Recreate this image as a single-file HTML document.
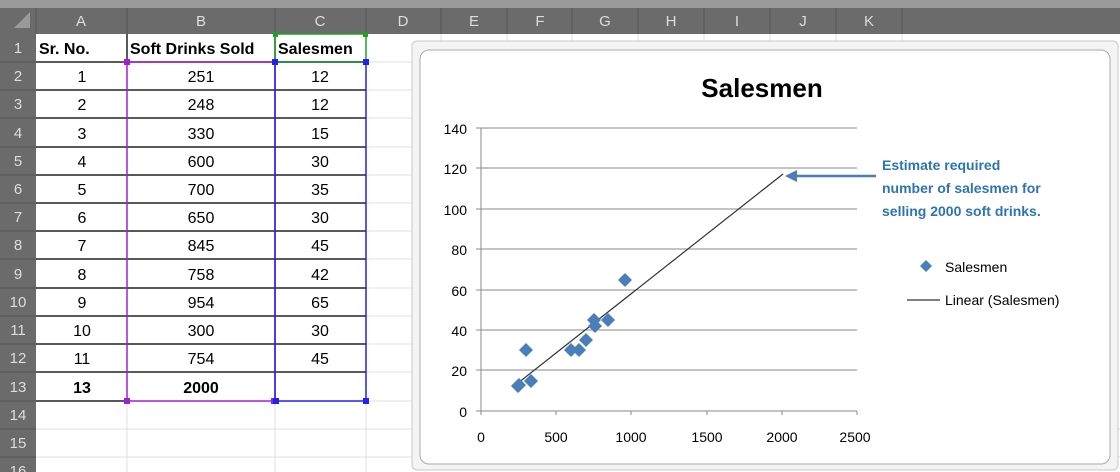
<!DOCTYPE html>
<html><head><meta charset="utf-8"><style>
*{margin:0;padding:0;box-sizing:border-box}
body{width:1120px;height:472px;overflow:hidden;background:#fff;font-family:"Liberation Sans",Carlito,sans-serif;position:relative}
.a{position:absolute}
</style></head><body>
<svg class="a" style="left:0;top:0" width="1120" height="472" xmlns="http://www.w3.org/2000/svg" font-family="Liberation Sans, sans-serif">
<rect x="0" y="0" width="1120" height="8" fill="#9a9a9a"/>
<rect x="0" y="8" width="1120" height="26" fill="#6b6b6b"/>
<rect x="0" y="34" width="36" height="438" fill="#6b6b6b"/>
<polygon points="14,28 30,28 30,12" fill="#9a9a9a"/>
<g stroke="#555" stroke-width="1">
<line x1="36" y1="8" x2="36" y2="34"/><line x1="127" y1="8" x2="127" y2="34"/><line x1="275" y1="8" x2="275" y2="34"/><line x1="366" y1="8" x2="366" y2="34"/><line x1="441" y1="8" x2="441" y2="34"/><line x1="507" y1="8" x2="507" y2="34"/><line x1="572" y1="8" x2="572" y2="34"/><line x1="638" y1="8" x2="638" y2="34"/><line x1="704" y1="8" x2="704" y2="34"/><line x1="770" y1="8" x2="770" y2="34"/><line x1="836" y1="8" x2="836" y2="34"/><line x1="902" y1="8" x2="902" y2="34"/>
</g>
<g fill="#ddd" font-size="15" text-anchor="middle">
<text x="81" y="26">A</text><text x="201" y="26">B</text><text x="320" y="26">C</text><text x="403" y="26">D</text><text x="474" y="26">E</text><text x="540" y="26">F</text><text x="605" y="26">G</text><text x="671" y="26">H</text><text x="737" y="26">I</text><text x="803" y="26">J</text><text x="869" y="26">K</text>
<text x="18" y="53">1</text><text x="18" y="81">2</text><text x="18" y="109">3</text><text x="18" y="138">4</text><text x="18" y="166">5</text><text x="18" y="194">6</text><text x="18" y="222">7</text><text x="18" y="250">8</text><text x="18" y="279">9</text><text x="18" y="307">10</text><text x="18" y="335">11</text><text x="18" y="363">12</text><text x="18" y="392">13</text><text x="18" y="420">14</text><text x="18" y="448">15</text><text x="18" y="476">16</text>
</g>
<g stroke="#555" stroke-width="1">
<line x1="0" y1="62" x2="36" y2="62"/><line x1="0" y1="90" x2="36" y2="90"/><line x1="0" y1="118" x2="36" y2="118"/><line x1="0" y1="147" x2="36" y2="147"/><line x1="0" y1="175" x2="36" y2="175"/><line x1="0" y1="203" x2="36" y2="203"/><line x1="0" y1="231" x2="36" y2="231"/><line x1="0" y1="259" x2="36" y2="259"/><line x1="0" y1="288" x2="36" y2="288"/><line x1="0" y1="316" x2="36" y2="316"/><line x1="0" y1="344" x2="36" y2="344"/><line x1="0" y1="372" x2="36" y2="372"/><line x1="0" y1="401" x2="36" y2="401"/><line x1="0" y1="429" x2="36" y2="429"/><line x1="0" y1="457" x2="36" y2="457"/>
</g>
<g stroke="#e0e0e0" stroke-width="1">
<line x1="36" y1="429" x2="1120" y2="429"/><line x1="36" y1="457" x2="1120" y2="457"/><line x1="127" y1="401" x2="127" y2="472"/><line x1="275" y1="401" x2="275" y2="472"/><line x1="366" y1="34" x2="366" y2="472"/>
<line x1="366" y1="62" x2="412" y2="62"/><line x1="366" y1="90" x2="412" y2="90"/><line x1="366" y1="118" x2="412" y2="118"/><line x1="366" y1="147" x2="412" y2="147"/><line x1="366" y1="175" x2="412" y2="175"/><line x1="366" y1="203" x2="412" y2="203"/><line x1="366" y1="231" x2="412" y2="231"/><line x1="366" y1="259" x2="412" y2="259"/><line x1="366" y1="288" x2="412" y2="288"/><line x1="366" y1="316" x2="412" y2="316"/><line x1="366" y1="344" x2="412" y2="344"/><line x1="366" y1="372" x2="412" y2="372"/><line x1="366" y1="401" x2="412" y2="401"/>
<line x1="441" y1="34" x2="441" y2="42"/><line x1="507" y1="34" x2="507" y2="42"/><line x1="572" y1="34" x2="572" y2="42"/><line x1="638" y1="34" x2="638" y2="42"/><line x1="704" y1="34" x2="704" y2="42"/><line x1="770" y1="34" x2="770" y2="42"/><line x1="836" y1="34" x2="836" y2="42"/><line x1="902" y1="34" x2="902" y2="42"/>
</g>
<g stroke="#222" stroke-width="1.5">
<line x1="36" y1="62" x2="366" y2="62"/><line x1="36" y1="90" x2="366" y2="90"/><line x1="36" y1="118" x2="366" y2="118"/><line x1="36" y1="147" x2="366" y2="147"/><line x1="36" y1="175" x2="366" y2="175"/><line x1="36" y1="203" x2="366" y2="203"/><line x1="36" y1="231" x2="366" y2="231"/><line x1="36" y1="259" x2="366" y2="259"/><line x1="36" y1="288" x2="366" y2="288"/><line x1="36" y1="316" x2="366" y2="316"/><line x1="36" y1="344" x2="366" y2="344"/><line x1="36" y1="372" x2="366" y2="372"/><line x1="36" y1="401" x2="127" y2="401"/>
<line x1="127" y1="34" x2="127" y2="62"/><line x1="275" y1="34" x2="275" y2="62"/>
</g>
<rect x="127" y="62" width="148" height="339" fill="none" stroke="#a020d0" stroke-width="1.5"/>
<rect x="275" y="62" width="91" height="339" fill="none" stroke="#2020f0" stroke-width="1.5"/>
<rect x="275" y="34" width="91" height="28" fill="none" stroke="#20a020" stroke-width="1.5"/>
<g fill="#a020d0"><rect x="124" y="59" width="6" height="6"/><rect x="124" y="398" width="6" height="6"/><rect x="271" y="398" width="6" height="6"/></g>
<g fill="#2020f0"><rect x="272" y="59" width="6" height="6"/><rect x="363" y="59" width="6" height="6"/><rect x="273" y="398" width="6" height="6"/><rect x="363" y="398" width="6" height="6"/></g>
<g fill="#20a020"><rect x="273" y="32" width="5" height="5"/><rect x="363" y="32" width="5" height="5"/></g>
<g font-size="16" fill="#000" font-weight="bold">
<text x="39" y="54">Sr. No.</text><text x="130" y="54">Soft Drinks Sold</text><text x="278" y="54">Salesmen</text>
</g>
<g font-size="16" fill="#000" text-anchor="middle">
<text x="82" y="82">1</text><text x="201" y="82">251</text><text x="320" y="82">12</text>
<text x="82" y="110">2</text><text x="201" y="110">248</text><text x="320" y="110">12</text>
<text x="82" y="139">3</text><text x="201" y="139">330</text><text x="320" y="139">15</text>
<text x="82" y="167">4</text><text x="201" y="167">600</text><text x="320" y="167">30</text>
<text x="82" y="195">5</text><text x="201" y="195">700</text><text x="320" y="195">35</text>
<text x="82" y="223">6</text><text x="201" y="223">650</text><text x="320" y="223">30</text>
<text x="82" y="251">7</text><text x="201" y="251">845</text><text x="320" y="251">45</text>
<text x="82" y="280">8</text><text x="201" y="280">758</text><text x="320" y="280">42</text>
<text x="82" y="308">9</text><text x="201" y="308">954</text><text x="320" y="308">65</text>
<text x="82" y="336">10</text><text x="201" y="336">300</text><text x="320" y="336">30</text>
<text x="82" y="364">11</text><text x="201" y="364">754</text><text x="320" y="364">45</text>
<text x="82" y="393" font-weight="bold">13</text><text x="201" y="393" font-weight="bold">2000</text>
</g>
<rect x="412" y="41" width="706" height="429" rx="5" fill="#f4f4f4" stroke="#c8c8c8"/>
<rect x="420" y="50" width="690" height="414" rx="9" fill="#fff" stroke="#aaa"/>
<text x="762" y="97" font-size="26" font-weight="bold" text-anchor="middle" fill="#000">Salesmen</text>
<g stroke="#8a8a8a" stroke-width="1">
<line x1="476" y1="128" x2="857" y2="128"/><line x1="476" y1="168" x2="857" y2="168"/><line x1="476" y1="209" x2="857" y2="209"/><line x1="476" y1="249" x2="857" y2="249"/><line x1="476" y1="290" x2="857" y2="290"/><line x1="476" y1="330" x2="857" y2="330"/><line x1="476" y1="370" x2="857" y2="370"/><line x1="476" y1="411" x2="857" y2="411"/>
<line x1="481" y1="128" x2="481" y2="415"/><line x1="556" y1="411" x2="556" y2="415"/><line x1="631" y1="411" x2="631" y2="415"/><line x1="707" y1="411" x2="707" y2="415"/><line x1="782" y1="411" x2="782" y2="415"/><line x1="857" y1="411" x2="857" y2="415"/>
</g>
<g font-size="14" fill="#000" text-anchor="end">
<text x="467" y="134">140</text><text x="467" y="174">120</text><text x="467" y="215">100</text><text x="467" y="255">80</text><text x="467" y="296">60</text><text x="467" y="336">40</text><text x="467" y="376">20</text><text x="467" y="417">0</text>
</g>
<g font-size="14" fill="#000" text-anchor="middle">
<text x="481" y="442">0</text><text x="556" y="442">500</text><text x="631" y="442">1000</text><text x="707" y="442">1500</text><text x="782" y="442">2000</text><text x="855" y="442">2500</text>
</g>
<line x1="518" y1="383" x2="783" y2="174" stroke="#333" stroke-width="1.2"/>
<g fill="#4a7ebb">
<path d="M519 378l7 7-7 7-7-7z"/><path d="M518 379l7 7-7 7-7-7z"/><path d="M531 374l7 7-7 7-7-7z"/><path d="M571 343l7 7-7 7-7-7z"/><path d="M586 333l7 7-7 7-7-7z"/><path d="M579 343l7 7-7 7-7-7z"/><path d="M608 313l7 7-7 7-7-7z"/><path d="M595 319l7 7-7 7-7-7z"/><path d="M625 273l7 7-7 7-7-7z"/><path d="M526 343l7 7-7 7-7-7z"/><path d="M594 313l7 7-7 7-7-7z"/>
<path d="M926 260l6 6-6 6-6-6z"/>
</g>
<text x="945" y="272" font-size="14" fill="#000">Salesmen</text>
<line x1="907" y1="300" x2="940" y2="300" stroke="#333" stroke-width="1.2"/>
<text x="945" y="305" font-size="14" fill="#000">Linear (Salesmen)</text>
<g font-size="14" font-weight="bold" fill="#2e74b5">
<text x="882" y="170">Estimate required</text><text x="882" y="193">number of salesmen for</text><text x="882" y="216">selling 2000 soft drinks.</text>
</g>
<line x1="876" y1="176" x2="792" y2="176" stroke="#4a7ebb" stroke-width="2.5"/>
<path d="M785 176l12-6v12z" fill="#4a7ebb"/>
</svg>
</body></html>
